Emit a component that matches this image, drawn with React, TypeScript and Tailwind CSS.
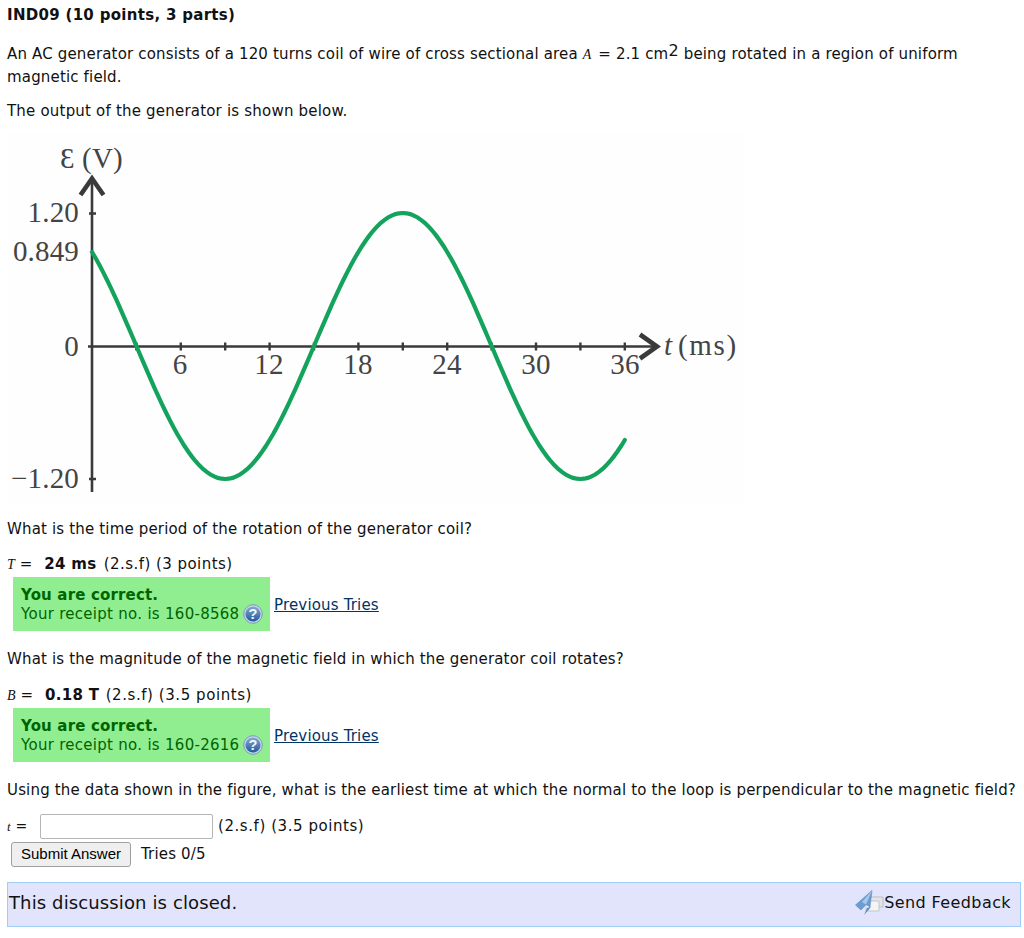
import React from "react";

const pts: string[] = [];
for (let t = 0; t <= 36.05; t += 0.25) {
  const x = 92 + (t * 44.4) / 3;
  const y = 346 - 133 * Math.cos((2 * Math.PI * t) / 24 + Math.PI / 4);
  pts.push(`${x.toFixed(1)},${y.toFixed(1)}`);
}
const xTicks = [3, 6, 9, 12, 15, 18, 21, 24, 27, 30, 33, 36];

function Chart() {
  const serif = "'Liberation Serif', serif";
  return (
    <svg width="745" height="372" viewBox="7 133 745 372" className="block">
      <rect x="7" y="133" width="738" height="372" fill="#fefefe" />
      <g stroke="#3a3a3a" fill="none">
        <path d="M92 180V492" strokeWidth="2.6" />
        <path d="M80.5 195L92 178.5L103.5 195" strokeWidth="4.6" />
        <path d="M88 346.5H655" strokeWidth="2.6" />
        <path d="M640 334.5L657 346.5L640 358.5" strokeWidth="4.6" />
        <path d="M89 213.5H96M89 479H96" strokeWidth="2.6" />
        {xTicks.map((t) => (
          <path key={t} d={`M${92 + t * 14.8} 342.5V350.5`} strokeWidth="2.4" />
        ))}
      </g>
      <polyline points={pts.join(" ")} fill="none" stroke="#14a35c" strokeWidth="4.2" strokeLinecap="round" />
      <g fill="#444444" fontFamily={serif} fontSize="29">
        <text x="79" y="222" textAnchor="end">1.20</text>
        <text x="79" y="261" textAnchor="end">0.849</text>
        <text x="79" y="356" textAnchor="end">0</text>
        <text x="79" y="488" textAnchor="end">−1.20</text>
        <text x="60" y="168">Ɛ (V)</text>
        {[
          [180, "6"], [269, "12"], [358, "18"], [447, "24"], [536, "30"], [625, "36"],
        ].map(([x, s]) => (
          <text key={s as string} x={x as number} y="374" textAnchor="middle">{s}</text>
        ))}
        <text x="664" y="355" fontStyle="italic">t</text>
        <text x="678" y="355" letterSpacing="1.7">(ms)</text>
      </g>
    </svg>
  );
}

function Help({ id }: { id: string }) {
  return (
    <svg width="20" height="20" viewBox="0 0 20 20" className="inline-block align-[-5px] ml-[4px]">
      <defs>
        <linearGradient id={id} x1="0" y1="0" x2="0" y2="1">
          <stop offset="0" stopColor="#86aad2" />
          <stop offset="1" stopColor="#1f5a9c" />
        </linearGradient>
      </defs>
      <circle cx="10" cy="10" r="9.3" fill="#c9d8e8" stroke="#6f93b8" strokeWidth="0.9" />
      <circle cx="10" cy="10" r="7.6" fill={`url(#${id})`} />
      <text x="10" y="15.2" textAnchor="middle" fontSize="14.5" fontWeight="700" fill="#f4f7fb" fontFamily="'Liberation Sans', sans-serif">?</text>
    </svg>
  );
}

function Correct({ receipt, id }: { receipt: string; id: string }) {
  return (
    <div className="flex items-start h-[54px] ml-[6px]">
      <div className="w-[257px] h-[54px] bg-[#90ee90] text-[#006400] pl-[8px] pt-[8px] leading-[20px]">
        <div className="font-bold">You are correct.</div>
        <div className="whitespace-nowrap -mt-[1px] tracking-[0.28px]">Your receipt no. is {receipt}<Help id={id} /></div>
      </div>
      <a className="ml-1 mt-[18px] leading-[20px] text-[#003366] underline">Previous Tries</a>
    </div>
  );
}

function MathI({ children }: { children: React.ReactNode }) {
  return <i className="font-['Liberation_Serif',serif] text-[14px] tracking-normal">{children}</i>;
}

export default function App() {
  return (
    <div className="w-[1024px] h-[938px] bg-white text-[#111] font-['DejaVu_Sans',sans-serif] text-[15px] tracking-[0.165px] overflow-hidden pl-[7px] pt-[5px]">
      <div className="font-bold leading-[20px] text-[15px] tracking-[0.3px]">IND09 (10 points, 3 parts)</div>
      <div className="mt-[18px] leading-[22px] w-[1000px]">
        An AC generator consists of a 120 turns coil of wire of cross sectional area <span className="mr-[2px]"><MathI>A</MathI></span> = 2.1 cm<span className="text-[16px] leading-[0] align-[3px]">2</span> being rotated in a region of uniform magnetic field.
      </div>
      <div className="mt-[13px] leading-[20px] tracking-[0.2px]">The output of the generator is shown below.</div>
      <div className="mt-[12px] h-[375px]"><Chart /></div>
      <div className="leading-[20px] mt-[11px]">What is the time period of the rotation of the generator coil?</div>
      <div className="leading-[20px] mt-[15px]"><MathI>T</MathI> = &nbsp;<b className="ml-[2px] tracking-[0.3px]">24 ms</b><span className="ml-[2px] tracking-[0.45px]"> (2.s.f) (3 points)</span></div>
      <div className="mt-[2px]"><Correct receipt="160-8568" id="h1" /></div>
      <div className="leading-[20px] mt-[18px]">What is the magnitude of the magnetic field in which the generator coil rotates?</div>
      <div className="leading-[20px] mt-[16px]"><MathI>B</MathI> = &nbsp;<b className="ml-[2px] tracking-[0.3px]">0.18 T</b><span className="ml-[1px] tracking-[0.56px]"> (2.s.f) (3.5 points)</span></div>
      <div className="mt-[2px]"><Correct receipt="160-2616" id="h2" /></div>
      <div className="leading-[20px] mt-[18px] whitespace-nowrap">Using the data shown in the figure, what is the earliest time at which the normal to the loop is perpendicular to the magnetic field?</div>
      <div className="flex items-center mt-[14px] h-[25px]">
        <span className="w-[33px] whitespace-pre text-[14px]"><i className="font-['Liberation_Serif',serif] text-[13px]">t</i> =</span>
        <input className="w-[173px] h-[25px] bg-white border border-[#b5b5b5] rounded-[2px]" />
        <span className="ml-[5px] tracking-[0.56px]">(2.s.f) (3.5 points)</span>
      </div>
      <div className="flex items-center mt-[3px] h-[25px] ml-1">
        <button className="w-[120px] h-[25px] pb-[2px] bg-[#efefef] border border-[#a0a0a0] rounded-[3px] font-['Liberation_Sans',sans-serif] text-[15px] tracking-normal text-black">Submit Answer</button>
        <span className="ml-[10px]">Tries 0/5</span>
      </div>
      <div className="mt-[15px] w-[1014px] h-[45px] bg-[#e1e4fb] border border-[#9fcdf8] flex items-center justify-between pl-[1px] pr-[9px] pb-[4px]">
        <span className="text-[18px] tracking-[0.12px]">This discussion is closed.</span>
        <span className="flex items-center text-[16px] tracking-[0.4px]">
          <svg width="29" height="26" viewBox="0 0 29 26">
            <path d="M14 7h14v10H14z" fill="#e4e4e8" stroke="#bdbdc6" />
            <path d="M11 11h13v10H11z" fill="#f4f4f6" stroke="#c4c4cc" />
            <path d="M0.5 15L17 0.5L15 17L11 14.5L6 20z" fill="#6c9dd1" stroke="#5b8cc2" strokeWidth="0.6" />
            <path d="M11 14.5L17 0.5L7 12z" fill="#a8c8ea" />
            <path d="M9 25L12 18L16 16.5L14 19.5z" fill="#5d90c8" />
          </svg>
          Send Feedback
        </span>
      </div>
    </div>
  );
}
